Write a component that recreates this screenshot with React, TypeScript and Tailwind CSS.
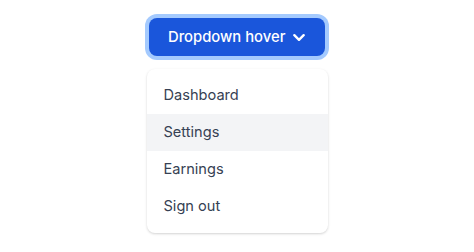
const items = ['Dashboard', 'Settings', 'Earnings', 'Sign out'];

export default function App() {
  return (
    <div className="min-h-[252px] w-full bg-white font-['Inter',sans-serif]">
      <div className="flex flex-col items-center pt-[18px]">
        {/* Trigger */}
        <button
          type="button"
          className="flex h-[38px] w-[176px] items-center rounded-lg bg-[#1A56DB] pl-[19px] text-[14.8px] font-medium text-white ring-4 ring-[#A4CAFE]"
        >
          Dropdown hover
          <svg className="ml-[8px] h-[7px] w-[12px]" viewBox="0 0 10 6" fill="none">
            <path d="m1 1 4 4 4-4" stroke="currentColor" strokeWidth="2" strokeLinecap="round" strokeLinejoin="round" />
          </svg>
        </button>

        {/* Menu */}
        <div className="mt-[13px] w-[181px] rounded-lg bg-white py-2 shadow-[0_1px_3px_rgba(0,0,0,0.12),0_1px_2px_rgba(0,0,0,0.06)]">
          <ul className="text-[14.6px] text-gray-700">
            {items.map((item) => (
              <li
                key={item}
                className={`flex h-[37px] items-center px-[17px] pt-[1px] ${item === 'Settings' ? 'bg-gray-100' : ''}`}
              >
                {item}
              </li>
            ))}
          </ul>
        </div>
      </div>
    </div>
  );
}
